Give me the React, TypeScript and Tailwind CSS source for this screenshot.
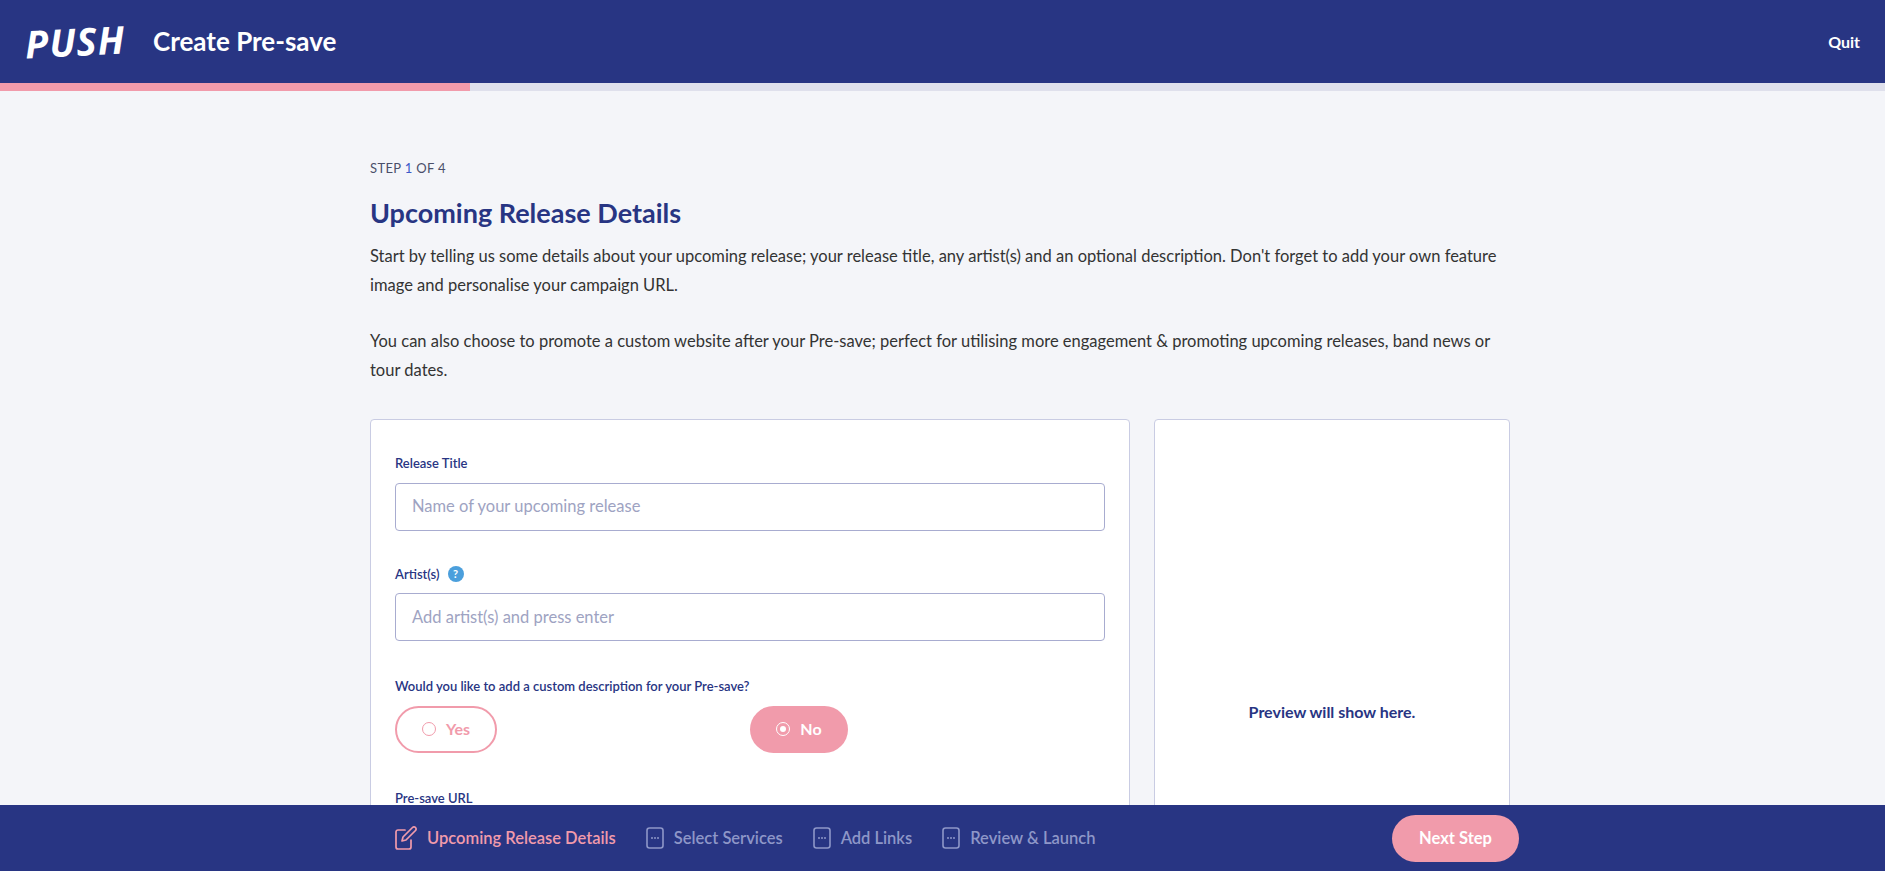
import React from "react";

const navy = "#283583";

function DotsBox() {
  return (
    <svg width="18" height="22" viewBox="0 0 18 22" fill="none">
      <rect x="1" y="1" width="16" height="20" rx="2.5" stroke="#8e97c8" strokeWidth="1.6" />
      <circle cx="6" cy="11" r="1" fill="#8e97c8" />
      <circle cx="9" cy="11" r="1" fill="#8e97c8" />
      <circle cx="12" cy="11" r="1" fill="#8e97c8" />
    </svg>
  );
}

function Pencil() {
  return (
    <svg width="22" height="24" viewBox="0 0 22 24" fill="none" stroke="#f19bab" strokeWidth="1.7" strokeLinecap="round" strokeLinejoin="round">
      <path d="M10 4H3a2 2 0 0 0-2 2v15a2 2 0 0 0 2 2h11a2 2 0 0 0 2-2v-7" />
      <path d="M17.5 1.5a2.1 2.1 0 0 1 3 3L11 14l-4 1 1-4z" />
    </svg>
  );
}

export default function App() {
  return (
    <div className="h-screen w-full flex flex-col overflow-hidden bg-[#f4f5f9]" style={{ fontFamily: "Lato, 'Noto Sans', sans-serif" }}>
      <header className="h-[83px] bg-[#283583] flex items-center px-[25px] text-white shrink-0">
        <span className="text-[38px] font-bold italic tracking-wide -rotate-3 mr-[28px]" style={{ fontFamily: "'Open Sans', sans-serif" }}>PUSH</span>
        <span className="text-[26px] font-bold">Create Pre-save</span>
        <span className="ml-auto text-[16px] font-bold">Quit</span>
      </header>
      <div className="h-[8px] bg-[#dfe0ec] shrink-0 flex">
        <div className="w-[470px] bg-[#f19bab]" />
      </div>
      <main className="flex-1 overflow-hidden">
        <div className="w-[1140px] ml-[370px] pt-[68px]">
          <div className="text-[13px] text-[#4a4f6a] tracking-wide">STEP <span className="text-[#3d59c9]">1</span> OF 4</div>
          <h1 className="text-[27px] font-bold mt-[14px] text-[#283583]">Upcoming Release Details</h1>
          <p className="text-[16.5px] leading-[29px] text-[#333] mt-[9px]">
            Start by telling us some details about your upcoming release; your release title, any artist(s) and an optional description. Don't forget to add your own feature image and personalise your campaign URL.
          </p>
          <p className="text-[16.5px] leading-[29px] text-[#333] mt-[27px] pr-[10px]">
            You can also choose to promote a custom website after your Pre-save; perfect for utilising more engagement &amp; promoting upcoming releases, band news or tour dates.
          </p>
          <div className="flex gap-[24px] mt-[34px]">
            <div className="w-[760px] h-[500px] bg-white border border-[#c9cce3] rounded-[4px] px-[24px] pt-[34px]">
              <label className="block text-[13px] font-semibold text-[#283583]">Release Title</label>
              <div className="mt-[9px] h-[48px] border border-[#a8acd0] rounded-[4px] flex items-center px-[16px] text-[16.5px] text-[#9ea3c2]">Name of your upcoming release</div>
              <label className="flex items-center gap-[8px] mt-[34px] text-[13px] font-semibold text-[#283583]">Artist(s)
                <span className="w-[16px] h-[16px] rounded-full bg-[#4b9fdc] text-white text-[11px] font-bold flex items-center justify-center">?</span>
              </label>
              <div className="mt-[9px] h-[48px] border border-[#a8acd0] rounded-[4px] flex items-center px-[16px] text-[16.5px] text-[#9ea3c2]">Add artist(s) and press enter</div>
              <div className="mt-[36px] text-[13px] font-semibold text-[#283583]">Would you like to add a custom description for your Pre-save?</div>
              <div className="flex mt-[9px]">
                <div className="w-[102px] h-[47px] rounded-full border-2 border-[#f19bab] flex items-center justify-center gap-[10px] text-[#f19bab] font-bold text-[16px]">
                  <span className="w-[14px] h-[14px] rounded-full border-[1.5px] border-[#f19bab]" />Yes
                </div>
                <div className="ml-[253px] w-[98px] h-[47px] rounded-full bg-[#f19bab] flex items-center justify-center gap-[10px] text-white font-bold text-[16px]">
                  <span className="w-[14px] h-[14px] rounded-full border-[1.5px] border-white flex items-center justify-center"><span className="w-[6px] h-[6px] rounded-full bg-white" /></span>No
                </div>
              </div>
              <div className="mt-[36px] text-[13px] font-semibold text-[#283583]">Pre-save URL</div>
              <div className="mt-[9px] h-[48px] border border-[#a8acd0] rounded-[4px]" />
            </div>
            <div className="w-[356px] h-[500px] bg-white border border-[#c9cce3] rounded-[4px] flex justify-center pt-[280px]">
              <span className="text-[16px] font-bold text-[#283583]">Preview will show here.</span>
            </div>
          </div>
        </div>
      </main>
      <footer className="h-[66px] bg-[#283583] shrink-0 flex items-center">
        <div className="ml-[395px] flex items-center gap-[30px] text-[16.5px] font-semibold">
          <span className="flex items-center gap-[10px] text-[#f19bab]"><Pencil />Upcoming Release Details</span>
          <span className="flex items-center gap-[10px] text-[#8e97c8]"><DotsBox />Select Services</span>
          <span className="flex items-center gap-[10px] text-[#8e97c8]"><DotsBox />Add Links</span>
          <span className="flex items-center gap-[10px] text-[#8e97c8]"><DotsBox />Review &amp; Launch</span>
        </div>
        <button className="ml-auto mr-[366px] w-[127px] h-[47px] rounded-full bg-[#f19bab] text-white font-bold text-[16.5px]">Next Step</button>
      </footer>
    </div>
  );
}
